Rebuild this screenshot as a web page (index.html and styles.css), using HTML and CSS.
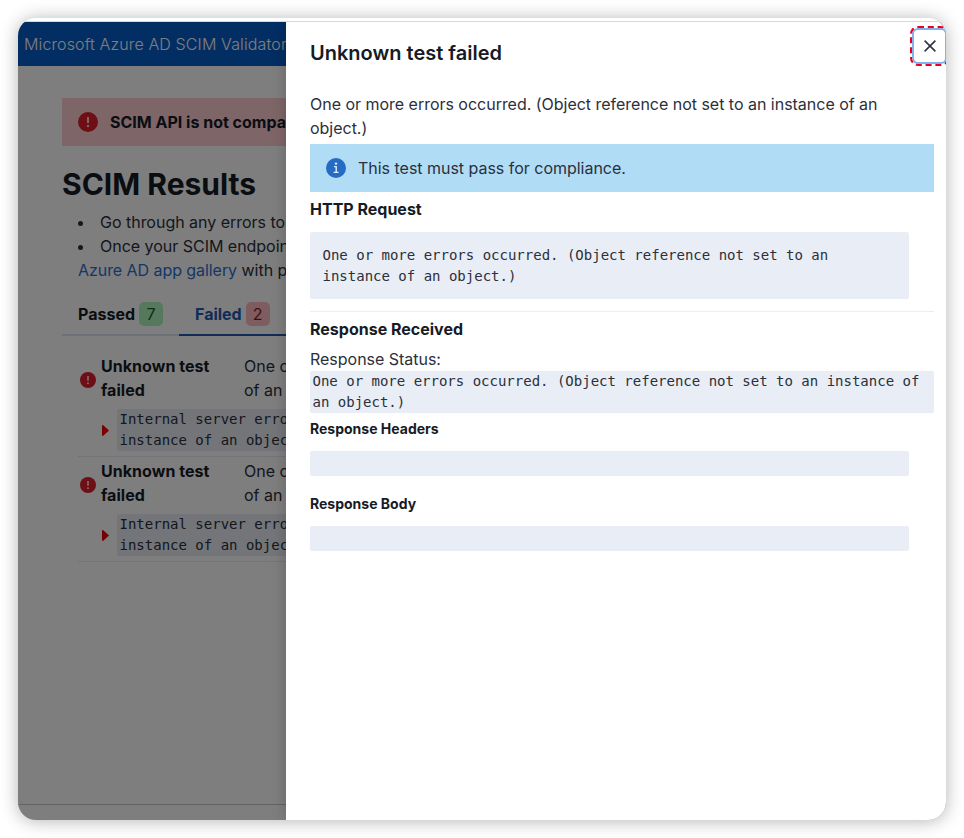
FILE: index.html
```html
<!DOCTYPE html>
<html lang="en">
<head>
<meta charset="utf-8">
<title>SCIM Validator</title>
<link rel="stylesheet" href="styles.css">
</head>
<body>
<div class="window">
  <div class="frame-top"></div>
  <div class="viewport">
    <header class="topbar">Microsoft Azure AD SCIM Validator</header>
    <main class="page">
      <div class="alert">
        <svg class="alert-icon" viewBox="0 0 20 20"><circle cx="10" cy="10" r="10" fill="#dc1f2c"/><path d="M10 5v6" stroke="#ffccd2" stroke-width="2"/><circle cx="10" cy="14" r="1.2" fill="#ffccd2"/></svg>
        <strong>SCIM API is not compatible</strong>
      </div>
      <h1>SCIM Results</h1>
      <ul class="notes">
        <li>Go through any errors to</li>
        <li>Once your SCIM endpoint<br><a>Azure AD app gallery</a> with pre</li>
      </ul>
      <nav class="tabs">
        <div class="tab">Passed<span class="badge green">7</span></div>
        <div class="tab active">Failed<span class="badge red">2</span></div>
      </nav>
      <div class="results">
        <section class="result">
          <svg class="result-icon" viewBox="0 0 20 20"><circle cx="10" cy="10" r="10" fill="#dc1f2c"/><path d="M10 5v6" stroke="#ffccd2" stroke-width="2.2"/><circle cx="10" cy="14" r="1.3" fill="#ffccd2"/></svg>
          <div class="result-body">
            <div class="result-head"><strong>Unknown test<br>failed</strong><span>One or<br>of an</span></div>
            <div class="detail"><svg class="caret" viewBox="0 0 7 11"><path d="M0 .5 1 0 7 5.5 1 11 0 10.5z" fill="#f00000"/></svg><code>Internal server error<br>instance of an object</code></div>
          </div>
        </section>
        <section class="result">
          <svg class="result-icon" viewBox="0 0 20 20"><circle cx="10" cy="10" r="10" fill="#dc1f2c"/><path d="M10 5v6" stroke="#ffccd2" stroke-width="2.2"/><circle cx="10" cy="14" r="1.3" fill="#ffccd2"/></svg>
          <div class="result-body">
            <div class="result-head"><strong>Unknown test<br>failed</strong><span>One or<br>of an</span></div>
            <div class="detail"><svg class="caret" viewBox="0 0 7 11"><path d="M0 .5 1 0 7 5.5 1 11 0 10.5z" fill="#f00000"/></svg><code>Internal server error<br>instance of an object</code></div>
          </div>
        </section>
      </div>
    </main>
    <footer class="footer"></footer>
    <div class="overlay"></div>
    <aside class="drawer">
      <h2>Unknown test failed</h2>
      <button class="close" aria-label="Close"><svg viewBox="0 0 12 12"><path d="M.6.6 11.4 11.4M11.4.6.6 11.4" stroke="#2b303b" stroke-width="1.5" fill="none"/></svg></button>
      <p>One or more errors occurred. (Object reference not set to an instance of an object.)</p>
      <div class="info">
        <svg viewBox="0 0 20 20"><circle cx="10" cy="10" r="10" fill="#256bc4"/><path d="M8 8.6h2.2v5.6M7.6 14.4h5" fill="none" stroke="#dcedfb" stroke-width="1.4"/><circle cx="10" cy="5.6" r="1.2" fill="#dcedfb"/></svg>
        <span>This test must pass for compliance.</span>
      </div>
      <h3>HTTP Request</h3>
      <pre class="block">One or more errors occurred. (Object reference not set to an
instance of an object.)</pre>
      <hr>
      <h3>Response Received</h3>
      <div class="status">Response Status:</div>
      <code class="status-code">One or more errors occurred. (Object reference not set to an instance of an object.)</code>
      <h4>Response Headers</h4>
      <pre class="block"></pre>
      <h4 class="body-title">Response Body</h4>
      <pre class="block"></pre>
    </aside>
  </div>
</div>
</body>
</html>
```
FILE: styles.css
```css
* { box-sizing: border-box; }
body {
  margin: 0;
  height: 838px;
  padding: 18px;
  overflow: hidden;
  background: #fff;
  color: #2b303b;
  font: 16px/24px Inter, "Liberation Sans", sans-serif;
  letter-spacing: -.02px;
}
h1, h2, h3, h4, p, ul, pre { margin: 0; }
h1, h2, h3, h4, strong { color: #161b26; }
h1, h2, h3, h4, strong, .tab { letter-spacing: 0; }
code, pre { font: 14px/21px "DejaVu Sans Mono", monospace; letter-spacing: 0; }
.window {
  display: flex;
  flex-direction: column;
  width: 928px;
  height: 802px;
  border-radius: 18px;
  overflow: hidden;
  background: #fff;
  box-shadow: 0 1px 18px rgba(0, 0, 0, .3);
}
.frame-top { flex: none; height: 4px; border-bottom: 1px solid #d8d8d8; }
.viewport { position: relative; flex: 1; display: flex; flex-direction: column; overflow: hidden; }
.topbar {
  flex: none;
  height: 44px;
  padding-left: 6px;
  line-height: 45px;
  background: #085dc8;
  color: #fff;
  font-weight: 300;
  letter-spacing: .13px;
  white-space: nowrap;
}
.page { flex: 1; padding: 32px 44px 0; }
.alert { display: flex; align-items: center; gap: 12px; height: 48px; padding-left: 16px; background: #ffccd2; }
.alert-icon { width: 20px; height: 20px; }
h1 { margin-top: 20px; font-size: 30px; line-height: 36px; font-weight: 700; }
.notes { margin-top: 8px; padding-left: 16px; list-style-position: inside; }
.notes a { color: #2a6fd0; letter-spacing: -.06px; }
.tabs { display: flex; margin-top: 12px; }
.tab {
  display: flex;
  flex: none;
  align-items: flex-start;
  gap: 4px;
  width: 117px;
  height: 42px;
  padding: 8px 16px 0;
  border-bottom: 2px solid #dde5f2;
  color: #161b26;
  font-weight: 700;
}
.tab.active { width: 600px; border-color: #245ab0; color: #245ab0; }
.badge { width: 24px; height: 24px; border-radius: 5px; text-align: center; font-weight: 400; }
.green { background: #aff5bd; color: #205c30; }
.red { background: #ffbcc2; color: #8b1621; }
.results { margin-top: 16px; padding-left: 16px; }
.result { display: flex; height: 105px; padding: 2px 0 0 2px; border-bottom: 1px solid #e9ebef; }
.result-icon { flex: none; width: 16px; height: 16px; margin-top: 18px; }
.result-body { margin-left: 5px; }
.result-head { display: flex; }
.result-head strong { width: 143px; font-weight: 700; letter-spacing: .05px; }
.detail { display: flex; align-items: center; margin-top: 7px; padding-left: 1px; }
.caret { width: 7px; height: 11px; margin-right: 8px; }
.detail code { width: 500px; padding-left: 2.5px; background: #e9edf5; border-radius: 2px; }
.footer { flex: none; height: 16px; border-top: 1px solid #c8c8c8; }
.overlay { position: absolute; inset: 0; background: rgba(0, 0, 0, .505); }
.drawer {
  position: absolute;
  inset: 0 0 0 268px;
  padding: 19px 12px 0 24px;
  background: #fff;
  box-shadow: 0 0 14px rgba(0, 0, 0, .2);
}
h2 { margin-bottom: 27px; font-size: 20px; font-weight: 600; }
.close {
  position: absolute;
  top: 4px;
  right: -3px;
  display: grid;
  place-items: center;
  width: 39px;
  height: 40px;
  padding: 0;
  border: 2px dashed #e90022;
  border-radius: 8px;
  background: #fff;
  box-shadow: inset 0 0 0 2px #82b1ed;
}
.close svg { width: 12px; height: 12px; }
.info { display: flex; align-items: center; gap: 12px; height: 48px; margin-top: 4px; padding-left: 16px; background: #b0dcf6; }
.info svg { width: 20px; height: 20px; }
h3 { margin: 5px 0 11px; font-size: 16px; line-height: 24px; font-weight: 700; }
.block { width: 599px; min-height: 25px; padding: 12.5px; background: #e9edf5; border-radius: 2px; }
hr { height: 1px; margin: 12px 0 5px; border: 0; background: #edeef1; }
hr + h3 { margin: 0 0 6px; }
.status-code { display: block; padding: 0 2.5px; background: #e9edf5; border-radius: 2px; }
h4 { margin: 5px 0 12px; font-size: 14px; line-height: 21px; font-weight: 700; }
.body-title { margin-top: 17px; }
```
